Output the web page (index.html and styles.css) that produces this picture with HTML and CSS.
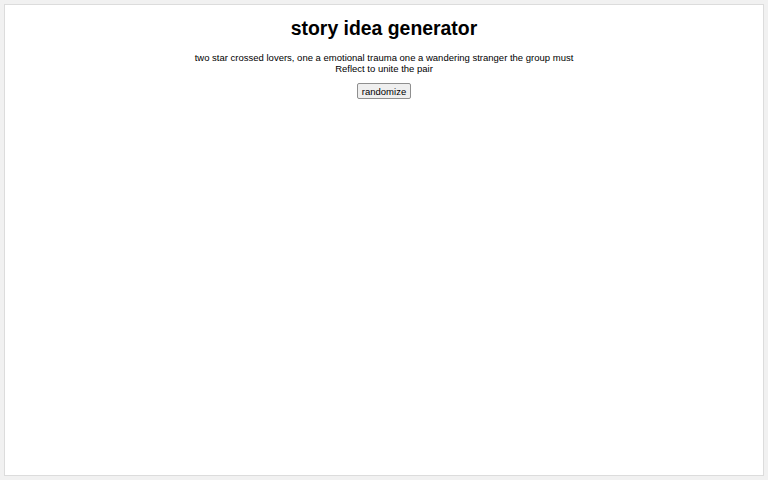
FILE: index.html
```html
<!DOCTYPE html>
<html lang="en">
<head>
    <meta charset="UTF-8" />
    <meta name="viewport" content="width=device-width, initial-scale=1.0"/>
    <title>story idea generator</title>
    <link rel="stylesheet" href="styles.css">
</head>
<body>
<div class="page">
    <h1>story idea generator</h1>
    <p id="story">two star crossed lovers, one a emotional trauma one a wandering stranger the group must Reflect to unite the pair</p>
    <button id="randomize">randomize</button>
</div>
</body>
</html>
```

FILE: styles.css
```css
/* светлая рамка вокруг страницы */
html{background:#f1f1f1;}
body{margin:4px;font-family:"Liberation Sans",Arial,sans-serif;color:#000;}
.page{background:#fff;border:1px solid #dcdcdc;height:472px;box-sizing:border-box;text-align:center;padding-top:12px;}
h1{font-size:19.4px;font-weight:700;margin:0 0 12px;}
p{font-size:9.5px;line-height:11px;max-width:400px;margin:0 auto 7px;}
button{font-family:"Liberation Sans",Arial,sans-serif;font-size:9.5px;padding:2px 4px 1px;background:#efefef;border:1px solid #8f8f8f;border-radius:2px;}
```
